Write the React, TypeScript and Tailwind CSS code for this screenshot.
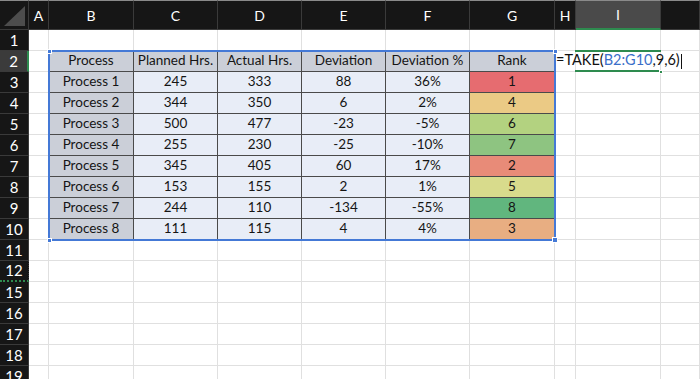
import React from "react";

const COLS = ["A", "B", "C", "D", "E", "F", "G", "H", "I", ""];
const ROWS = [1, 2, 3, 4, 5, 6, 7, 8, 9, 10, 11, 12, 15, 16, 17, 18, 19];

const DATA: (string | number)[][] = [
  ["Process", "Planned Hrs.", "Actual Hrs.", "Deviation", "Deviation %", "Rank"],
  ["Process 1", 245, 333, 88, "36%", 1],
  ["Process 2", 344, 350, 6, "2%", 4],
  ["Process 3", 500, 477, -23, "-5%", 6],
  ["Process 4", 255, 230, -25, "-10%", 7],
  ["Process 5", 345, 405, 60, "17%", 2],
  ["Process 6", 153, 155, 2, "1%", 5],
  ["Process 7", 244, 110, -134, "-55%", 8],
  ["Process 8", 111, 115, 4, "4%", 3],
];

const RANK_BG: Record<number, string> = {
  1: "bg-[#e66c70]",
  2: "bg-[#e88b78]",
  3: "bg-[#e8ae82]",
  4: "bg-[#ebca85]",
  5: "bg-[#d8db8c]",
  6: "bg-[#b3d280]",
  7: "bg-[#8ec481]",
  8: "bg-[#61b67e]",
};

function TableCell({ r, c }: { r: number; c: number }) {
  const v = DATA[r][c];
  let bg = "bg-[#e8edf7]";
  if (r === 0 || c === 0) bg = "bg-[#cbcfd8]";
  if (r > 0 && c === 5) bg = RANK_BG[v as number];
  return (
    <div
      className={`${bg} border-r border-b border-[#4a4a4a] flex items-center justify-center text-[13.5px] text-[#151515] leading-none`}
    >
      {v}
    </div>
  );
}

export default function App() {
  const cells: React.ReactNode[] = [];

  cells.push(
    <div
      key="corner"
      className="relative bg-[#161616] border-r border-b border-[#3a3a3a] border-t border-t-[#8a8a8a]"
    >
      <div className="absolute right-[3px] bottom-[3px] w-0 h-0 border-l-[21px] border-l-transparent border-b-[20px] border-b-[#4d4d4d]" />
    </div>
  );
  COLS.forEach((col, i) => {
    const sel = col === "I";
    cells.push(
      <div
        key={`h${i}`}
        className={`flex items-center justify-center text-[14px] text-white border-t border-t-[#8a8a8a] border-r border-[#3a3a3a] ${
          sel ? "bg-[#4a4a4a] border-b-2 border-b-[#2e8b4f]" : "bg-[#161616] border-b border-b-[#3a3a3a]"
        }`}
      >
        {col}
      </div>
    );
  });

  ROWS.forEach((n) => {
    const selRow = n === 2;
    const hidden = n === 12;
    cells.push(
      <div
        key={`r${n}`}
        className={`flex items-center justify-center text-[15px] text-white ${
          selRow ? "bg-[#3b3b3b] border-r-2 border-r-[#2e8b4f]" : "bg-[#161616] border-r border-r-[#3a3a3a]"
        } ${hidden ? "border-b-2 border-dotted border-b-[#2e8b4f]" : "border-b border-b-[#3a3a3a]"}`}
      >
        {n}
      </div>
    );
    COLS.forEach((_, ci) => {
      const key = `c${n}-${ci}`;
      if (n >= 2 && n <= 10 && ci >= 1 && ci <= 6) {
        cells.push(<TableCell key={key} r={n - 2} c={ci - 1} />);
        return;
      }
      if (n === 2 && ci === 7) {
        cells.push(
          <div
            key={key}
            className="relative border-r border-b border-[#e0e0e0] bg-white flex items-center overflow-visible"
          >
            <span className="relative z-10 whitespace-nowrap pl-[1px] text-[14.5px] text-[#111] leading-none">
              =TAKE(<span className="text-[#3a6fc9]">B2:G10</span>,9,6)
              <span className="inline-block align-middle ml-[1px] w-[1px] h-[15px] bg-[#111]" />
            </span>
          </div>
        );
        return;
      }
      if (n === 2 && ci === 8) {
        cells.push(
          <div key={key} className="relative border-r border-b border-[#e0e0e0] bg-white">
            <div className="absolute -left-px -right-px -top-px h-[2px] bg-[#2e8b4f]" />
            <div className="absolute -left-px -right-px -bottom-px h-[2px] bg-[#2e8b4f]" />
            <div className="absolute -right-[3px] -bottom-[3px] w-[4px] h-[4px] bg-[#2e8b4f] border border-white" />
          </div>
        );
        return;
      }
      cells.push(
        <div key={key} className="border-r border-b border-[#e0e0e0] bg-white" />
      );
    });
  });

  return (
    <div className="w-[700px] h-[379px] overflow-hidden bg-white font-['Lato',sans-serif]">
      <div className="relative grid grid-cols-[29px_20px_85px_84px_84px_84px_84px_85px_21px_85px_1fr] grid-rows-[30px_repeat(17,21px)]">
        {cells}
        <div className="absolute left-[48px] top-[50px] w-[508px] h-[191px] border-2 border-[#4479d6] pointer-events-none" />
        <div className="absolute left-[47px] top-[49px] w-[5px] h-[5px] bg-[#4479d6] border border-white" />
        <div className="absolute left-[553px] top-[49px] w-[5px] h-[5px] bg-[#4479d6] border border-white" />
        <div className="absolute left-[47px] top-[238px] w-[5px] h-[5px] bg-[#4479d6] border border-white" />
        <div className="absolute left-[552px] top-[237px] w-[6px] h-[6px] bg-[#4479d6] border border-white" />
      </div>
    </div>
  );
}
